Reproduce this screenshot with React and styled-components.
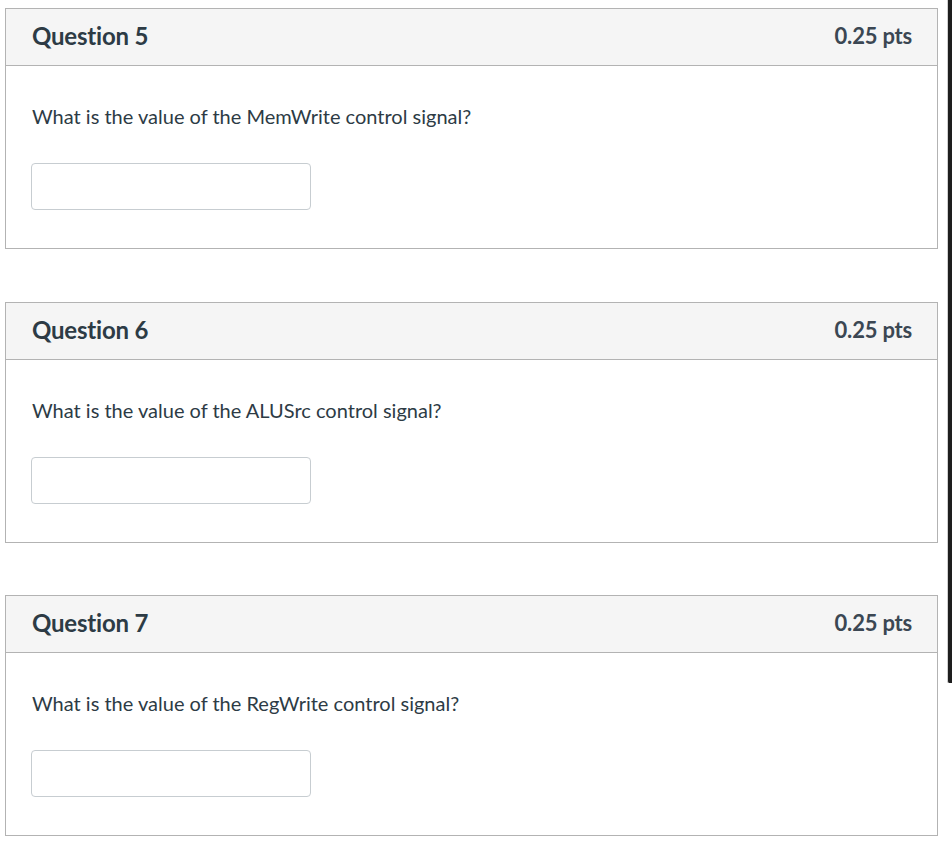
import React from "react";
import styled, { createGlobalStyle } from "styled-components";

const Global = createGlobalStyle`
  html, body { margin: 0; padding: 0; background: #ffffff; }
  body { font-family: Lato, "Open Sans", "Liberation Sans", sans-serif; }
  * { box-sizing: border-box; }
`;

const Page = styled.div`
  position: relative;
  width: 952px;
  min-height: 853px;
  padding: 8px 0 0 5px;
`;

const Scrollbar = styled.div`
  position: absolute;
  top: 0;
  right: 0;
  width: 5px;
  height: 683px;
  background: #1e1e1e;
  border-left: 1px solid #d0d0d0;
  border-bottom-left-radius: 2px;
`;

const Card = styled.section`
  width: 933px;
  border: 1px solid #b3b3b3;
  margin-bottom: 53px;
  &:nth-of-type(2) { margin-bottom: 52px; }
`;

const Header = styled.header`
  display: flex;
  align-items: center;
  justify-content: space-between;
  height: 57px;
  padding: 0 25px 3px 26px;
  background: #f5f5f5;
  border-bottom: 1px solid #b3b3b3;
  color: #2d3b45;
`;

const Title = styled.h2`
  margin: 0;
  font-size: 24px;
  font-weight: 700;
  letter-spacing: -0.2px;
`;

const Points = styled.span`
  font-size: 22px;
  font-weight: 700;
  color: #3b4753;
  letter-spacing: -0.2px;
`;

const Body = styled.div`
  padding: 35px 26px 38px 25px;
`;

const Prompt = styled.p`
  margin: 0 0 32px 1px;
  font-size: 20px;
  line-height: 30px;
  color: #2d3b45;
`;

const Answer = styled.input`
  display: block;
  width: 280px;
  height: 47px;
  border: 1px solid #c7cdd1;
  border-radius: 4px;
  background: #fff;
  font-family: inherit;
  font-size: 16px;
  padding: 0 10px;
  outline: none;
`;

const questions = [
  { n: 5, signal: "MemWrite" },
  { n: 6, signal: "ALUSrc" },
  { n: 7, signal: "RegWrite" },
];

export default function App() {
  return (
    <Page>
      <Global />
      {questions.map((q) => (
        <Card key={q.n}>
          <Header>
            <Title>Question {q.n}</Title>
            <Points>0.25 pts</Points>
          </Header>
          <Body>
            <Prompt>What is the value of the {q.signal} control signal?</Prompt>
            <Answer type="text" aria-label={`Answer for question ${q.n}`} />
          </Body>
        </Card>
      ))}
      <Scrollbar />
    </Page>
  );
}
